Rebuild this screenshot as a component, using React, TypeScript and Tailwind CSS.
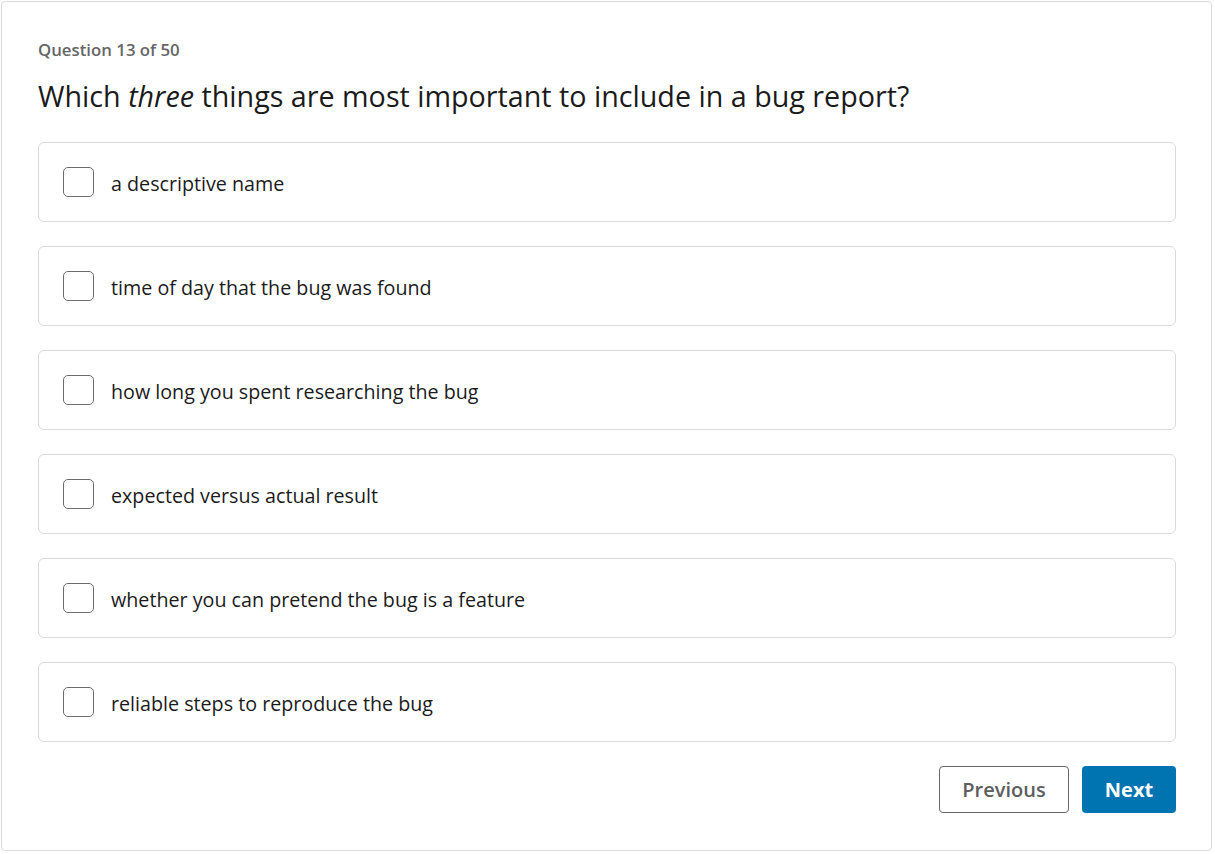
const options = [
  "a descriptive name",
  "time of day that the bug was found",
  "how long you spent researching the bug",
  "expected versus actual result",
  "whether you can pretend the bug is a feature",
  "reliable steps to reproduce the bug",
];

export default function App() {
  return (
    <div className="w-[1215px] h-[854px] bg-white pt-px pl-px font-['Open_Sans',sans-serif]">
      <div className="w-[1211px] h-[850px] rounded border border-[#dadada] pl-9 pr-[35px] pt-[38px]">
        <p className="text-[16.8px] leading-5 font-semibold text-[#666666]">
          Question 13 of 50
        </p>
        <h1 className="mt-[18px] text-[28.7px] leading-9 text-[#1b1b1b]">
          Which <em>three</em> things are most important to include in a bug report?
        </h1>
        <div className="mt-[28px] flex flex-col gap-6">
          {options.map((text) => (
            <label
              key={text}
              className="flex h-20 items-center gap-[17px] rounded-md border border-[#dadada] pl-6"
            >
              <span className="h-[30px] w-[31px] shrink-0 rounded-[5px] border-[1.5px] border-[#6b6b6b]" />
              <span className="pt-[3px] text-[19.7px] text-[#1b1b1b]">{text}</span>
            </label>
          ))}
        </div>
        <div className="mt-6 flex justify-end gap-[13px]">
          <button className="h-[47px] w-[130px] rounded border border-[#666666] text-[20px] font-semibold text-[#5e5e5e]">
            Previous
          </button>
          <button className="h-[47px] w-[94px] rounded bg-[#0073b1] text-[20px] font-bold text-white">
            Next
          </button>
        </div>
      </div>
    </div>
  );
}
